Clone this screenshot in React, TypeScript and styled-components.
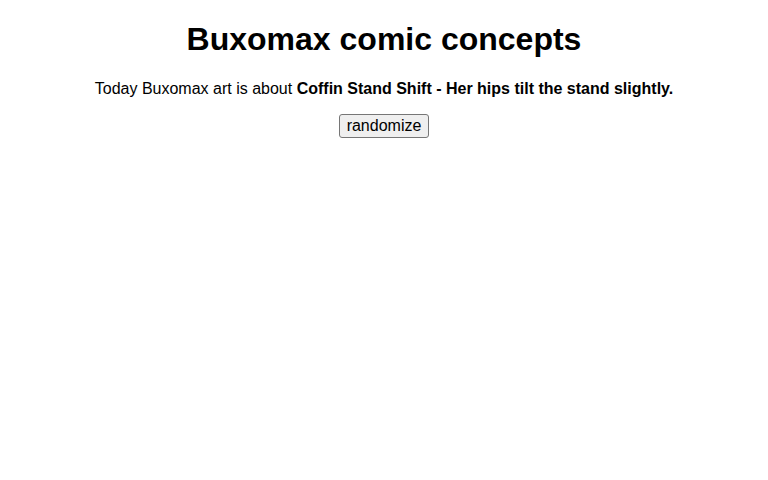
import { useState } from 'react';
import { createGlobalStyle, styled } from 'styled-components';

const concepts = [
  'Coffin Stand Shift - Her hips tilt the stand slightly.',
  'Doorway Squeeze - She turns sideways to fit through.',
  'Chair Creak - The old chair protests loudly.',
];

function App() {
  const [index, setIndex] = useState(0);

  return (
    <Page>
      <GlobalStyle />
      <Title>Buxomax comic concepts</Title>
      <Intro>
        Today Buxomax art is about <strong>{concepts[index]}</strong>
      </Intro>
      <RandomButton onClick={() => setIndex((index + 1) % concepts.length)}>
        randomize
      </RandomButton>
    </Page>
  );
}

export default App;

const GlobalStyle = createGlobalStyle`
  body {
    margin: 0;
    background: #ffffff;
    color: #000000;
    font-family: "Liberation Sans", Arial, sans-serif;
  }
`;

const Page = styled.div`
  display: flex;
  flex-direction: column;
  align-items: center;
  padding: 0 8px;
  text-align: center;
`;

const Title = styled.h1`
  font-size: 32px;
  font-weight: bold;
  line-height: 37px;
  margin: 21.44px 0;
`;

const Intro = styled.p`
  font-size: 16px;
  line-height: 18px;
  margin: 0 0 16px;

  strong {
    font-weight: bold;
  }
`;

const RandomButton = styled.button`
  font-family: "Liberation Sans", Arial, sans-serif;
  font-size: 16px;
  line-height: 18px;
  padding: 2px 7px;
  color: #000;
  background: #efefef;
  border: 1px solid #767676;
  border-radius: 3px;
  cursor: pointer;
`;
